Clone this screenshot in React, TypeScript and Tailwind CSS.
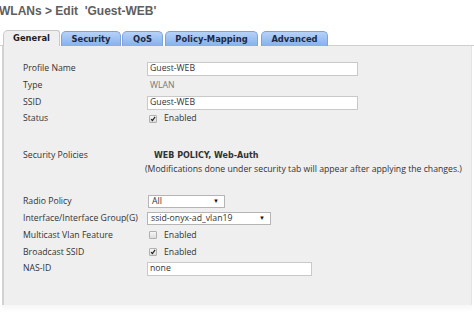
import React from "react";

const Check = ({ checked }: { checked: boolean }) => (
  <span className="inline-flex w-[8px] h-[8px] border border-[#b0b0b0] bg-gradient-to-b from-[#f6f6f6] to-[#dcdcdc] rounded-[1px] items-center justify-center">
    {checked && (
      <svg width="8" height="8" viewBox="0 0 8 8">
        <path d="M1.5 4.2 L3.2 6 L6.8 1.2" stroke="#222" strokeWidth="1.6" fill="none" />
      </svg>
    )}
  </span>
);

const Input = ({ value, w }: { value: string; w: string }) => (
  <div className={`${w} h-[14px] bg-white border border-[#c9c9c9] flex items-center pl-[2px] text-[8.7px] text-[#333]`}>
    {value}
  </div>
);

const Select = ({ value, w }: { value: string; w: string }) => (
  <div className={`${w} h-[13px] bg-white border border-[#b5b5b5] flex items-center justify-between pl-[3px] pr-[5px] text-[8.7px] text-[#333]`}>
    <span>{value}</span>
    <span className="text-[6px] text-[#111]">▼</span>
  </div>
);

const Row = ({ label, h, children }: { label: string; h: string; children?: React.ReactNode }) => (
  <div className={`flex items-center ${h}`}>
    <div className="w-[124px] text-[8.7px] text-[#333]">{label}</div>
    <div className="flex items-center">{children}</div>
  </div>
);

export default function App() {
  const tabBlue =
    "h-[15px] flex items-center justify-center rounded-t-[5px] border border-b-0 border-[#7ea3dc] bg-gradient-to-b from-[#b6d2f8] to-[#86b0ec] text-[8.4px] font-bold text-[#1e2a44] font-['DejaVu_Sans',sans-serif]";
  return (
    <div className="w-[474px] h-[312px] bg-white overflow-hidden font-['Open_Sans',sans-serif]">
      <div className="h-[30px] pt-[4px] pl-0 -ml-[1px] text-[12px] font-bold text-[#5e5e5e] leading-[14px] font-['Liberation_Sans',sans-serif] whitespace-pre">
        {"WLANs > Edit  'Guest-WEB'"}
      </div>
      <div className="flex items-end h-[16px]">
        <div className="w-[3px] h-full border-b border-[#cfcfcf]" />
        <div className="w-[57px] h-[16px] flex items-center justify-center rounded-tl-[5px] rounded-tr-[3px] border border-b-0 border-[#c8c8c8] bg-[#efefef] text-[8.4px] font-bold text-[#1e1e1e] font-['DejaVu_Sans',sans-serif]">
          General
        </div>
        <div className={`${tabBlue} w-[60px] ml-[1px]`}>Security</div>
        <div className={`${tabBlue} w-[41px] ml-[1px]`}>QoS</div>
        <div className={`${tabBlue} w-[93px] ml-[2px]`}>Policy-Mapping</div>
        <div className={`${tabBlue} w-[67px] ml-[3px]`}>Advanced</div>
        <div className="flex-1 h-full border-b border-[#cfcfcf]" />
      </div>
      <div className="ml-[2px] w-[470px] h-[259px] bg-[#efefef] border-l-2 border-[#d2d2d2] border-r border-r-[#e4e4e4] pt-[15px] pl-[19px]">
        <Row label="Profile Name" h="h-[16px]">
          <Input value="Guest-WEB" w="w-[211px]" />
        </Row>
        <Row label="Type" h="h-[17px]">
          <span className="pl-[3px] text-[8.7px] text-[#777]">WLAN</span>
        </Row>
        <Row label="SSID" h="h-[17px]">
          <Input value="Guest-WEB" w="w-[211px]" />
        </Row>
        <Row label="Status" h="h-[16px]">
          <span className="pl-[2px] flex items-center">
            <Check checked />
            <span className="ml-[7px] text-[8.7px] text-[#333]">Enabled</span>
          </span>
        </Row>
        <div className="h-[21px]" />
        <Row label="Security Policies" h="h-[15px]">
          <span className="pl-[7px] text-[8px] font-bold text-[#333] font-['DejaVu_Sans',sans-serif]">
            WEB POLICY, Web-Auth
          </span>
        </Row>
        <div className="h-[13px] flex items-center pl-[122px] text-[8.7px] text-[#333] whitespace-nowrap">
          (Modifications done under security tab will appear after applying the changes.)
        </div>
        <div className="h-[17px]" />
        <Row label="Radio Policy" h="h-[17px]">
          <Select value="All" w="w-[77px] ml-[1px]" />
        </Row>
        <Row label="Interface/Interface Group(G)" h="h-[17px]">
          <Select value="ssid-onyx-ad_vlan19" w="w-[124px]" />
        </Row>
        <Row label="Multicast Vlan Feature" h="h-[17px]">
          <span className="pl-[2px] flex items-center">
            <Check checked={false} />
            <span className="ml-[7px] text-[8.7px] text-[#333]">Enabled</span>
          </span>
        </Row>
        <Row label="Broadcast SSID" h="h-[17px]">
          <span className="pl-[2px] flex items-center">
            <Check checked />
            <span className="ml-[7px] text-[8.7px] text-[#333]">Enabled</span>
          </span>
        </Row>
        <Row label="NAS-ID" h="h-[15px]">
          <Input value="none" w="w-[165px]" />
        </Row>
      </div>
      <div className="ml-[2px] w-[470px] h-[7px] bg-gradient-to-b from-[#f6f6f6] to-white" />
    </div>
  );
}
